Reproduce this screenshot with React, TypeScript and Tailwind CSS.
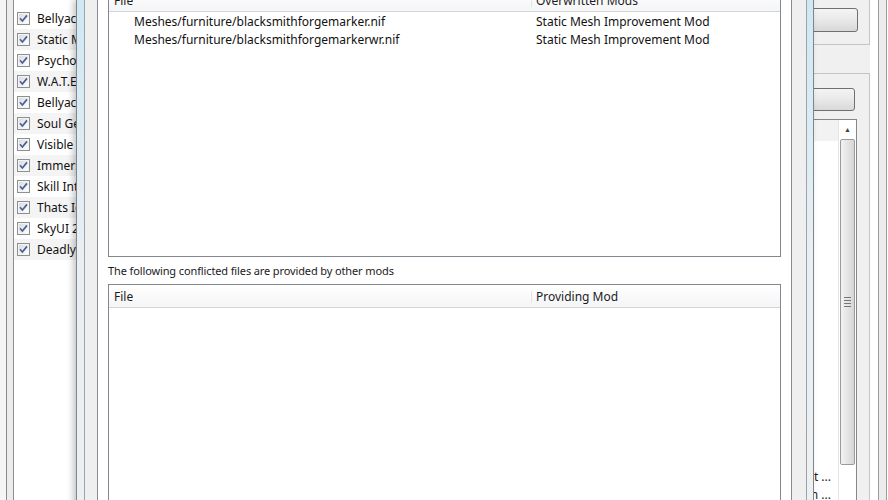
import { FC, ReactElement } from 'react'

const mods = [
  'Bellyaches Animal and Creature Pack',
  'Static Mesh Improvement Mod',
  'Psychosteve Sounds',
  'W.A.T.E.R',
  'Bellyaches New Dragon Species',
  'Soul Gems Differ',
  'Visible Favorite Gems',
  'Immersive Armors',
  'Skill Interface Overhaul',
  'Thats Iconic',
  'SkyUI 2.2',
  'Deadly Dragons',
]

const overwrites = [
  ['Meshes/furniture/blacksmithforgemarker.nif', 'Static Mesh Improvement Mod'],
  ['Meshes/furniture/blacksmithforgemarkerwr.nif', 'Static Mesh Improvement Mod'],
]

const CheckBox: FC = (): ReactElement => (
  <svg width="13" height="13" viewBox="0 0 13 13" className="shrink-0">
    <defs>
      <linearGradient id="cbfill" x1="0" y1="0" x2="1" y2="1">
        <stop offset="0" stopColor="#d9dbde" />
        <stop offset="1" stopColor="#ffffff" />
      </linearGradient>
    </defs>
    <rect x="0.5" y="0.5" width="12" height="12" fill="#f4f4f4" stroke="#8e8f8f" />
    <rect x="2" y="2" width="9" height="9" fill="url(#cbfill)" />
    <path d="M3 6.3 L5.4 9 L10 3.4" fill="none" stroke="#4c5f94" strokeWidth="1.7" />
  </svg>
)

const Button: FC<{ className: string }> = ({ className }): ReactElement => (
  <div
    className={`shrink-0 rounded-[3px] border border-[#707070] bg-linear-to-b from-[#f4f4f4] via-[#e9e9e9] to-[#d8d8d8] ${className}`}
  />
)

function ListHeader({ second }: { second: string }) {
  return (
    <div className="flex h-[23px] shrink-0 items-center border-b border-[#d5d5d5] bg-linear-to-b from-white to-[#f4f5f7] pt-[1px] text-[#1b1b1b]">
      <div className="w-[423px] border-r border-[#e3e3e3] pl-[5px]">File</div>
      <div className="pl-[4px]">{second}</div>
    </div>
  )
}

export default function App() {
  return (
    <div className="relative h-[500px] w-[888px] overflow-hidden bg-[#f0f0f0] font-['Noto_Sans',sans-serif] text-[12px] leading-none text-[#111]">
      {/* main window behind the dialog */}
      <div className="flex h-[500px]">
        <div className="w-[7px] border-r border-[#8c8c8c] bg-[#f3f5f7]" />
        <div className="w-[6px] bg-[#ececec]" />
        <div className="flex-1 border-l border-[#8e8e8e] bg-white pt-[8px]">
          {mods.map((m, i) => (
            <div
              key={m}
              className={`flex h-[21px] items-center pl-[3px] ${i % 2 === 1 ? 'bg-[#f4f4f4]' : 'bg-white'}`}
            >
              <CheckBox />
              <span className="ml-[7px] whitespace-nowrap">{m}</span>
            </div>
          ))}
        </div>

        <div className="flex w-[120px] flex-col">
          <div className="flex h-[45px] shrink-0 justify-end border-b border-r border-[#c4c4c4] pr-[11px] pt-[8px]">
            <Button className="h-[24px] w-[90px]" />
          </div>
          <div className="mt-[28px] flex min-h-0 flex-1 flex-col items-end overflow-hidden border-r border-t border-[#c4c4c4] pr-[12px] pt-[14px]">
            <Button className="mr-[2px] h-[23px] w-[90px]" />
            <div className="mt-[8px] flex h-[400px] w-[100px] shrink-0 border border-[#828790] bg-white">
              <div className="flex flex-1 flex-col">
                <div className="h-[21px] bg-[#f2f2f2]" />
                <div className="h-[327px]" />
                <div className="flex h-[18px] items-center justify-end pr-[7px] text-[#222]">Sort ...</div>
                <div className="flex h-[18px] items-center justify-end pr-[7px] text-[#222]">Run ...</div>
              </div>
              <div className="flex w-[18px] flex-col border-l border-[#e6e6e6] bg-white">
                <div className="flex h-[19px] items-center justify-center text-[7px] text-[#444]">▲</div>
                <div className="mx-[1px] flex h-[326px] items-center justify-center rounded-[2px] border border-[#9a9a9a] bg-linear-to-r from-[#f3f3f3] to-[#d6d6d6]">
                  <div className="flex flex-col gap-[2px]">
                    <div className="h-px w-[7px] bg-[#777]" />
                    <div className="h-px w-[7px] bg-[#777]" />
                    <div className="h-px w-[7px] bg-[#777]" />
                    <div className="h-px w-[7px] bg-[#777]" />
                  </div>
                </div>
              </div>
            </div>
          </div>
        </div>

        <div className="w-[8px] bg-white" />
        <div className="w-[9px] border-x border-[#9c9c9c] bg-[#ececec]" />
        <div className="w-px bg-white" />
      </div>

      {/* conflicts dialog */}
      <div className="absolute left-[76px] top-0 flex h-[520px] w-[738px] border-x border-[#7d858d] bg-linear-to-b from-[#cfe8f3] via-[#eaeff3] to-[#eeeff0] pl-[7px] pr-[6px] shadow-[-3px_0_6px_rgba(0,0,0,0.22)]">
        <div className="flex flex-1 border-x border-[#9ba3ab] bg-[#efefef] pl-[12px] pr-[14px]">
          <div className="flex flex-1 flex-col border-x border-[#898c95] bg-white px-[10px]">
            <div className="-mt-[12px] flex h-[269px] flex-col border border-[#828790] bg-white">
              <ListHeader second="Overwritten Mods" />
              <div className="pt-[1px]">
                {overwrites.map(([file, mod]) => (
                  <div key={file} className="flex h-[18px] items-center text-[#111]">
                    <div className="w-[423px] pl-[25px]">{file}</div>
                    <div className="pl-[4px]">{mod}</div>
                  </div>
                ))}
              </div>
            </div>
            <div className="flex h-[27px] items-center text-[11px] tracking-[-0.12px] text-[#1a1a1a]">
              The following conflicted files are provided by other mods
            </div>
            <div className="flex flex-1 flex-col border border-[#828790] bg-white">
              <ListHeader second="Providing Mod" />
            </div>
          </div>
        </div>
      </div>
    </div>
  )
}
